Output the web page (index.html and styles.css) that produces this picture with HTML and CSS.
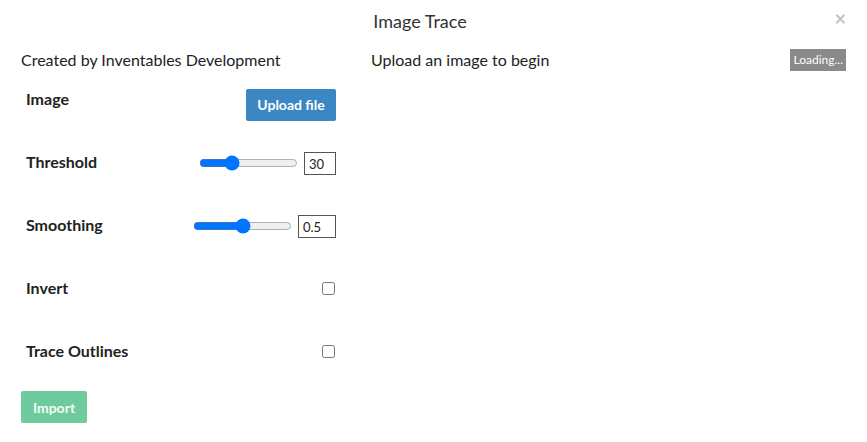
FILE: index.html
```html
<html>
    <head>
        <link rel="stylesheet" href="styles.css">
    </head>
    <body>
        <div class="header">
            <h3 class="title">Image Trace</h3>
            <span class="close">&times;</span>
        </div>
        <div class="content">
            <div class="left">
                <p class="intro">Created by Inventables Development</p>
                <div class="row">
                    <h4>Image</h4>
                    <button class="upload">Upload file</button>
                </div>
                <div class="row">
                    <h4>Threshold</h4>
                    <div class="control">
                        <input class="slider" type="range" min="0" max="100" value="30" />
                        <input class="field" type="text" value="30" />
                    </div>
                </div>
                <div class="row">
                    <h4>Smoothing</h4>
                    <div class="control">
                        <input class="slider" type="range" min="0" max="1" step="0.1" value="0.5" />
                        <input class="field wide" type="text" value="0.5" />
                    </div>
                </div>
                <div class="row">
                    <h4>Invert</h4>
                    <input class="check" type="checkbox" />
                </div>
                <div class="row">
                    <h4>Trace Outlines</h4>
                    <input class="check" type="checkbox" />
                </div>
                <button class="import" disabled>Import</button>
            </div>
            <div class="right">
                <div class="status">
                    <span>Upload an image to begin</span>
                    <span class="loading">Loading...</span>
                </div>
            </div>
        </div>
    </body>
</html>
```

FILE: styles.css
```css
body{
    margin: 0;
    font-family: Lato, "Noto Sans", sans-serif;
    color: #222222;
    background-color: white;
}
.header{
    display: flex;
    align-items: center;
    height: 42px;
    padding: 0 21px;
}
.title{
    flex: 1;
    margin: 0;
    text-align: center;
    font-size: 18px;
    font-weight: normal;
    color: #333333;
}
.close{
    width: 27px;
    text-align: right;
    font-size: 20px;
    font-weight: bold;
    color: #c4c4c4;
    margin-top: -6px;
}
.content{
    display: flex;
    gap: 35px;
    padding: 0 21px;
}
.left{
    width: 315px;
    flex-shrink: 0;
}
.intro{
    margin: 0;
    padding-top: 9px;
    font-size: 16px;
    line-height: 17px;
}
.row{
    display: flex;
    justify-content: space-between;
    align-items: center;
    height: 63px;
    padding-left: 5px;
}
h4{
    margin: 0 0 2px 0;
    font-size: 16px;
    font-weight: bold;
}
.upload{
    margin-top: 10px;
    width: 90px;
    height: 32px;
    font-family: inherit;
    font-size: 14px;
    font-weight: bold;
    color: white;
    background-color: #3a87c4;
    border: none;
    border-radius: 2px;
}
.control{
    display: flex;
    align-items: center;
    gap: 6px;
}
.slider{
    width: 99px;
    margin: 0;
}
.field{
    width: 32px;
    height: 23px;
    box-sizing: border-box;
    padding: 0 4px;
    margin-top: 2px;
    border: 1px solid #555555;
    border-radius: 0;
    font-family: inherit;
    font-size: 13px;
    color: #222222;
}
.wide{
    width: 38px;
}
.check{
    width: 13px;
    height: 13px;
    margin: 0 1px 0 0;
}
.import{
    margin-top: 8px;
    width: 66px;
    height: 32px;
    font-family: inherit;
    font-size: 14px;
    font-weight: bold;
    color: #f4fcf8;
    background-color: #6dcb9e;
    border: none;
    border-radius: 2px;
}
.right{
    flex: 1;
}
.status{
    display: flex;
    justify-content: space-between;
    align-items: center;
    height: 17px;
    margin-top: 9px;
    font-size: 16px;
}
.loading{
    background-color: #8a8a8a;
    color: white;
    font-size: 12px;
    line-height: 22px;
    height: 22px;
    padding: 0 3px;
}
```
